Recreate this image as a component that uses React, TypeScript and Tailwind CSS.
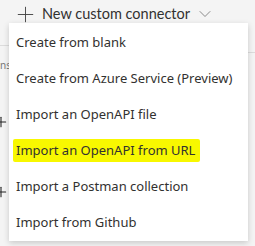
import { Plus, ChevronDown } from 'lucide-react';

const items = [
  'Create from blank',
  'Create from Azure Service (Preview)',
  'Import an OpenAPI file',
  'Import an OpenAPI from URL',
  'Import a Postman collection',
  'Import from Github',
];

export default function App() {
  return (
    <div className="relative w-[255px] h-[246px] overflow-hidden bg-[#f4f4f4] font-['Noto_Sans',sans-serif] text-[#323130]">
      {/* Command bar */}
      <div className="flex items-center h-[28px] pl-[13px]">
        <Plus className="w-[25px] h-[25px] text-[#444]" strokeWidth={0.9} />
        <span className="ml-[4px] font-['Lato',sans-serif] text-[14.5px] leading-none whitespace-nowrap">New custom connector</span>
        <ChevronDown className="ml-[5px] w-[20px] h-[20px] text-[#666]" strokeWidth={0.9} />
      </div>

      {/* Page content peeking behind the menu */}
      <div className="flex flex-col">
        <div className="mt-[17px] w-[9px] h-px bg-[#dcdcdc]" />
        <span className="mt-[14px] text-[10px] leading-none text-[#777]">ns</span>
        <Plus className="mt-[41px] -ml-[7px] w-[16px] h-[22px] text-[#222]" strokeWidth={1.6} />
        <Plus className="mt-[48px] -ml-[7px] w-[16px] h-[22px] text-[#222]" strokeWidth={1.6} />
      </div>
      <div className="absolute right-0 top-[52px] w-[8px] h-px bg-[#dcdcdc]" />

      {/* Dropdown menu */}
      <div className="absolute left-[9px] top-[23px] w-[239px] bg-white py-[1px] shadow-[0_2px_6px_rgba(0,0,0,0.18)]">
        {items.map((label, i) => (
          <div key={i} className="h-[36px] flex items-center px-[7px]">
            <span
              className={
                i === 3
                  ? 'text-[13px] leading-none whitespace-nowrap py-[5px] pl-[3px] pr-[5px] -ml-[3px] bg-[#f8f800] rounded-[2px]'
                  : 'text-[13px] leading-none whitespace-nowrap'
              }
            >
              {label}
            </span>
          </div>
        ))}
      </div>
    </div>
  );
}
